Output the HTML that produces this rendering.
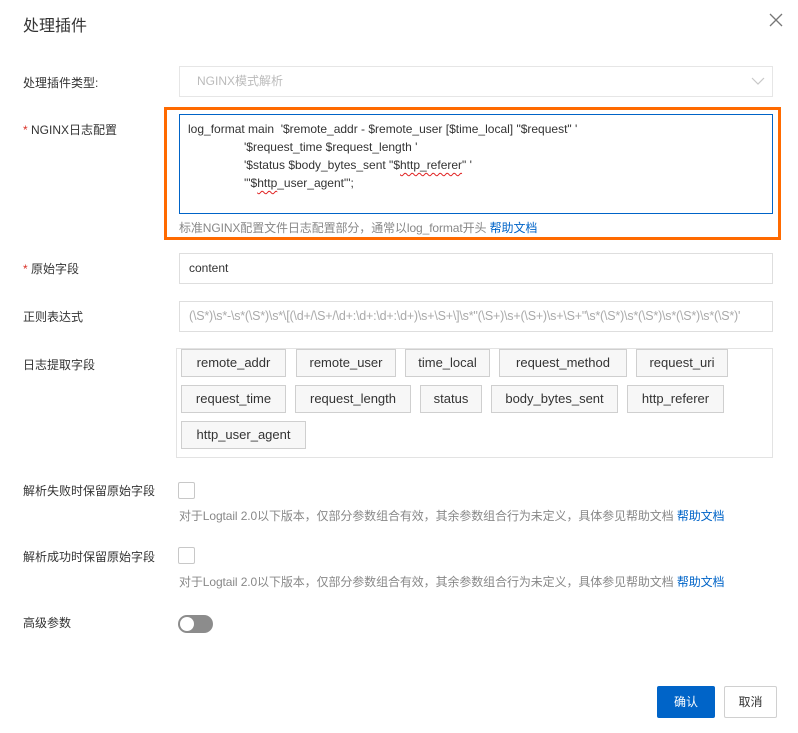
<!DOCTYPE html>
<html><head><meta charset="utf-8"><style>
*{box-sizing:border-box;margin:0;padding:0}
body{width:798px;height:733px;background:#fff;position:relative;overflow:hidden;font-family:"Liberation Sans","Noto Sans CJK SC",sans-serif;font-size:12px;color:#333}
.a{position:absolute;white-space:nowrap}
.lbl{position:absolute;left:23px;font-size:12px;color:#333;line-height:16px}
.star{color:#d93026}
.inp{position:absolute;left:179px;width:594px;height:31px;border:1px solid #dedede;background:#fff;padding-left:9px;line-height:29px;font-size:12px;white-space:nowrap;overflow:hidden}
.tag{position:absolute;height:28px;border:1px solid #cfcfcf;background:#f7f7f7;line-height:26px;text-align:center;font-size:13px;color:#333}
.help{position:absolute;left:179px;font-size:12px;color:#888;line-height:16px;letter-spacing:-0.1px}
.link{color:#0064c8}
.cb{position:absolute;left:178px;width:17px;height:17px;border:1px solid #c8c8c8;border-radius:2px;background:#fff}
.ta{position:absolute;left:8px;font-size:12px;line-height:18px;color:#333}
.sq{text-decoration:underline wavy #e02020;text-underline-offset:3px;text-decoration-thickness:1px}
</style></head><body>
<div class="a" style="left:23px;top:12px;font-size:16px;color:#333">处理插件</div>
<svg class="a" style="left:768px;top:12px" width="16" height="16" viewBox="0 0 16 16"><path d="M2 2L14 14M14 2L2 14" stroke="#777" stroke-width="1.3"/></svg>

<div class="lbl" style="top:75px">处理插件类型:</div>
<div class="inp" style="top:66px;color:#bbb;padding-left:17px;border-color:#e6e6e6">NGINX模式解析</div>
<svg class="a" style="left:751px;top:76px" width="14" height="10" viewBox="0 0 14 10"><path d="M1 2L7 8L13 2" stroke="#c8c8c8" stroke-width="1.2" fill="none"/></svg>

<div class="lbl" style="top:122px"><span class="star">*</span> NGINX日志配置</div>
<div class="a" style="left:164px;top:107px;width:617px;height:133px;border:3px solid #ff6a00"></div>
<div class="a" style="left:179px;top:114px;width:594px;height:100px;border:1px solid #0064c8">
 <div class="ta" style="top:5px">log_format main &nbsp;'$remote_addr - $remote_user [$time_local] "$request" '</div>
 <div class="ta" style="top:23px;left:64px">'$request_time $request_length '</div>
 <div class="ta" style="top:41px;left:64px">'$status $body_bytes_sent "$<span class="sq">http_referer</span>" '</div>
 <div class="ta" style="top:59px;left:64px">'"$<span class="sq">http</span>_user_agent"';</div>
</div>
<div class="help" style="top:220px">标准NGINX配置文件日志配置部分，通常以log_format开头 <span class="link">帮助文档</span></div>

<div class="lbl" style="top:261px"><span class="star">*</span> 原始字段</div>
<div class="inp" style="top:253px;color:#333">content</div>

<div class="lbl" style="top:309px">正则表达式</div>
<div class="inp" style="top:301px;color:#aaa;font-size:12.5px;letter-spacing:-0.2px">(\S*)\s*-\s*(\S*)\s*\[(\d+/\S+/\d+:\d+:\d+:\d+)\s+\S+\]\s*"(\S+)\s+(\S+)\s+\S+"\s*(\S*)\s*(\S*)\s*(\S*)\s*(\S*)'</div>

<div class="lbl" style="top:357px">日志提取字段</div>
<div class="a" style="left:176px;top:348px;width:597px;height:110px;border:1px solid #e3e3e3"></div>
<div class="tag" style="left:181px;top:349px;width:105px">remote_addr</div>
<div class="tag" style="left:296px;top:349px;width:100px">remote_user</div>
<div class="tag" style="left:405px;top:349px;width:85px">time_local</div>
<div class="tag" style="left:499px;top:349px;width:128px">request_method</div>
<div class="tag" style="left:636px;top:349px;width:92px">request_uri</div>
<div class="tag" style="left:181px;top:385px;width:105px">request_time</div>
<div class="tag" style="left:295px;top:385px;width:116px">request_length</div>
<div class="tag" style="left:420px;top:385px;width:62px">status</div>
<div class="tag" style="left:491px;top:385px;width:127px">body_bytes_sent</div>
<div class="tag" style="left:627px;top:385px;width:97px">http_referer</div>
<div class="tag" style="left:181px;top:421px;width:125px">http_user_agent</div>

<div class="lbl" style="top:483px">解析失败时保留原始字段</div>
<div class="cb" style="top:482px"></div>
<div class="help" style="top:508px">对于Logtail 2.0以下版本，仅部分参数组合有效，其余参数组合行为未定义，具体参见帮助文档 <span class="link">帮助文档</span></div>

<div class="lbl" style="top:549px">解析成功时保留原始字段</div>
<div class="cb" style="top:547px"></div>
<div class="help" style="top:574px">对于Logtail 2.0以下版本，仅部分参数组合有效，其余参数组合行为未定义，具体参见帮助文档 <span class="link">帮助文档</span></div>

<div class="lbl" style="top:615px">高级参数</div>
<div class="a" style="left:178px;top:615px;width:35px;height:18px;border-radius:9px;background:#8c8c8c"></div>
<div class="a" style="left:180px;top:617px;width:14px;height:14px;border-radius:7px;background:#fff"></div>

<div class="a" style="left:657px;top:686px;width:58px;height:32px;background:#0064c8;color:#fff;line-height:32px;text-align:center;font-size:12px;border-radius:2px">确认</div>
<div class="a" style="left:724px;top:686px;width:53px;height:32px;border:1px solid #d0d0d0;color:#333;line-height:30px;text-align:center;font-size:12px;border-radius:2px">取消</div>
</body></html>
